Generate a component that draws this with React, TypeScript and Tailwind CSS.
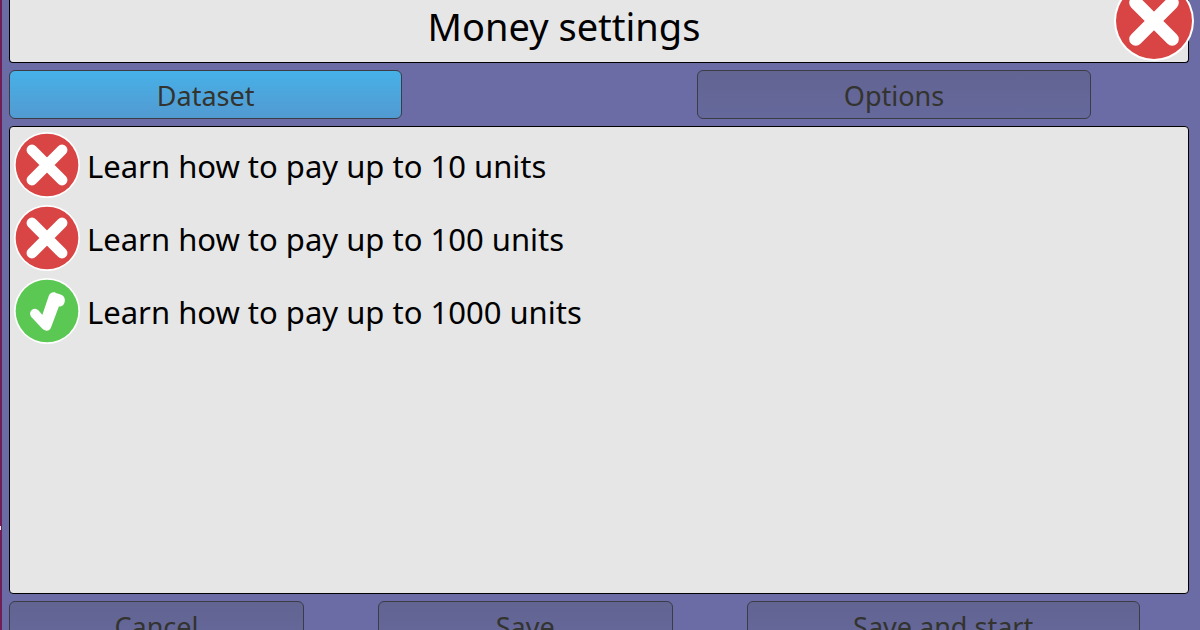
import { useState } from 'react'

type Tab = 'dataset' | 'options'

type Level = {
  id: string
  label: string
  enabled: boolean
}

const INITIAL_LEVELS: Level[] = [
  { id: 'pay-10', label: 'Learn how to pay up to 10 units', enabled: false },
  { id: 'pay-100', label: 'Learn how to pay up to 100 units', enabled: false },
  { id: 'pay-1000', label: 'Learn how to pay up to 1000 units', enabled: true },
]

const BUTTON_BASE =
  'h-[49px] rounded-md border border-[#3b3c45] pt-0.5 text-center text-[27px] leading-8 text-[#33332f]'
const BUTTON_IDLE = 'bg-linear-to-b from-[#626592] to-[#65689b]'
const BUTTON_ACTIVE = 'bg-linear-to-b from-[#46b1e8] to-[#519ad1]'

function CrossIcon({ className }: { className: string }) {
  return (
    <svg viewBox="0 0 80 80" className={className} aria-hidden="true">
      <circle cx="40" cy="40" r="40" fill="#fff" />
      <circle cx="40" cy="40" r="38" fill="#d94444" />
      <path d="M21.8 21.8L58.2 58.2M58.2 21.8L21.8 58.2" stroke="#fff" strokeWidth="13.2" strokeLinecap="round" />
    </svg>
  )
}

function TickIcon({ className }: { className: string }) {
  return (
    <svg viewBox="0 0 80 80" className={className} aria-hidden="true">
      <circle cx="40" cy="40" r="40" fill="#fff" />
      <circle cx="40" cy="40" r="38" fill="#5bc853" />
      <path
        d="M42.2 21.6C43.5 18.2 46 16.8 49.5 17.3C51.5 18.4 53 19.2 55.5 19.6C60 20.5 62 24 61.6 27.8C61 32.5 58.5 34.6 54.4 34.6L45.2 59C44.2 62 42.3 63.8 39.6 63.8C37.4 63.8 36 63 34.4 61.6L21 47.2C17.6 43 20.5 37.4 25.5 37.4C29 37.6 31.5 41.4 34.3 44.8Z"
        fill="#fff"
      />
    </svg>
  )
}

export default function App() {
  const [tab, setTab] = useState<Tab>('dataset')
  const [levels, setLevels] = useState(INITIAL_LEVELS)

  const toggleLevel = (id: string) => {
    setLevels((prev) => prev.map((level) => (level.id === id ? { ...level, enabled: !level.enabled } : level)))
  }

  return (
    <div className="flex h-screen overflow-hidden bg-[#6b6ca5] font-['Noto_Sans',sans-serif]">
      {/* Sliver of the activity behind the dialog */}
      <div className="flex w-0.5 shrink-0 flex-col justify-end bg-[#6f1f56] pb-[100px]">
        <span className="h-1 w-px bg-[#e6e6e6]" />
      </div>

      <div className="flex min-w-0 flex-1 flex-col gap-[7px] pr-[11px] pl-[7px]">
        {/* Title bar */}
        <header className="relative flex h-[63px] shrink-0 justify-center rounded-b border border-t-0 border-black bg-[#e6e6e6] pr-[70px]">
          <h1 className="pt-1 text-[38px] leading-11 text-black">Money settings</h1>
          <button type="button" aria-label="Close" className="absolute -top-[19px] -right-1.5 size-20 cursor-pointer">
            <CrossIcon className="size-full" />
          </button>
        </header>

        {/* Tabs */}
        <nav className="grid shrink-0 grid-cols-2" role="tablist">
          <button
            type="button"
            role="tab"
            aria-selected={tab === 'dataset'}
            onClick={() => setTab('dataset')}
            className={`w-2/3 ${BUTTON_BASE} ${tab === 'dataset' ? BUTTON_ACTIVE : BUTTON_IDLE}`}
          >
            Dataset
          </button>
          <button
            type="button"
            role="tab"
            aria-selected={tab === 'options'}
            onClick={() => setTab('options')}
            className={`w-2/3 justify-self-center ${BUTTON_BASE} ${tab === 'options' ? BUTTON_ACTIVE : BUTTON_IDLE}`}
          >
            Options
          </button>
        </nav>

        {/* Level list */}
        <main className="min-h-0 flex-1 rounded border border-black bg-[#e6e6e6] px-1 py-[5px]">
          {tab === 'dataset' && (
            <ul className="flex flex-col gap-[7px]">
              {levels.map((level) => (
                <li key={level.id}>
                  <label htmlFor={level.id} className="flex cursor-pointer items-center gap-[7px]">
                    <input
                      id={level.id}
                      type="checkbox"
                      checked={level.enabled}
                      onChange={() => toggleLevel(level.id)}
                      className="sr-only"
                    />
                    {level.enabled ? (
                      <TickIcon className="size-[66px] shrink-0" />
                    ) : (
                      <CrossIcon className="size-[66px] shrink-0" />
                    )}
                    <span className="pt-0.5 text-[31px] leading-10 text-black">{level.label}</span>
                  </label>
                </li>
              ))}
            </ul>
          )}
        </main>

        {/* Actions, running past the bottom edge of the window */}
        <footer className="-mb-5 flex shrink-0 gap-[6.25%]">
          <button type="button" className={`w-1/4 ${BUTTON_BASE} ${BUTTON_IDLE}`}>
            Cancel
          </button>
          <button type="button" className={`w-1/4 ${BUTTON_BASE} ${BUTTON_IDLE}`}>
            Save
          </button>
          <button type="button" className={`w-1/3 ${BUTTON_BASE} ${BUTTON_IDLE}`}>
            Save and start
          </button>
        </footer>
      </div>
    </div>
  )
}
